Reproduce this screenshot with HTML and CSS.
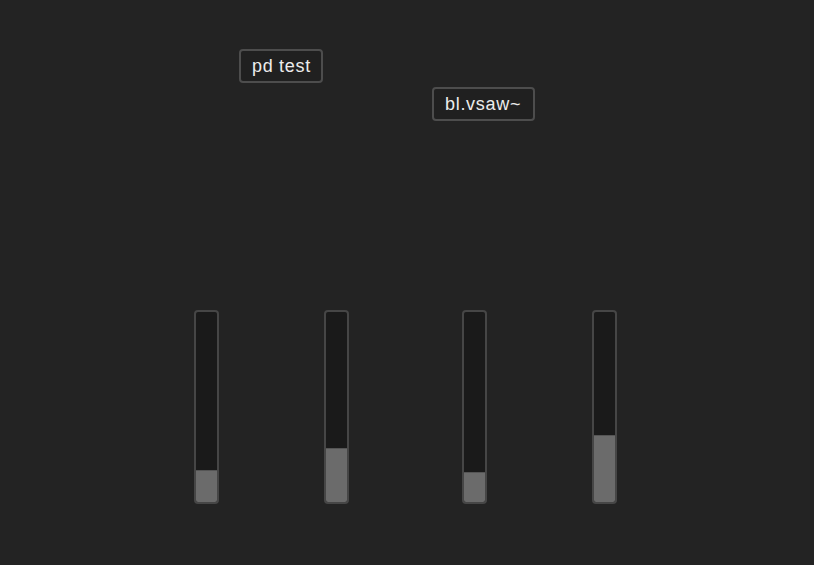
FILE: index.html
```html
<!DOCTYPE html>
<html>
<head>
<meta charset="utf-8">
<link rel="stylesheet" href="styles.css">
</head>
<body>
<div class="canvas">
  <div class="obj obj-pd">pd test</div>
  <div class="obj obj-saw">bl.vsaw~</div>
  <div class="slider s1"><div class="fill" style="height:31px"></div></div>
  <div class="slider s2"><div class="fill" style="height:53px"></div></div>
  <div class="slider s3"><div class="fill" style="height:29px"></div></div>
  <div class="slider s4"><div class="fill" style="height:66px"></div></div>
</div>
</body>
</html>
```
FILE: styles.css
```css
html, body {
  margin: 0;
  padding: 0;
  background: #232323;
}
.canvas {
  position: relative;
  width: 814px;
  height: 565px;
  background: #232323;
  overflow: hidden;
  font-family: "Liberation Sans", Arial, sans-serif;
}
.obj {
  position: absolute;
  box-sizing: border-box;
  height: 34px;
  border: 2px solid #4d4d4d;
  border-radius: 4px;
  background: #202020;
  color: #ececec;
  font-size: 18px;
  letter-spacing: 0.7px;
  line-height: 30px;
  padding: 0 11px;
  white-space: nowrap;
}
.obj-pd { left: 239px; top: 49px; width: 84px; }
.obj-saw { left: 432px; top: 87px; width: 103px; }
.slider {
  position: absolute;
  top: 310px;
  box-sizing: border-box;
  width: 25px;
  height: 194px;
  border: 2px solid #464646;
  border-radius: 4px;
  background: #1a1a1a;
  display: flex;
  flex-direction: column;
  justify-content: flex-end;
  overflow: hidden;
}
.fill {
  background: #6b6b6b;
  border-top: 1px solid #555;
}
.s1 { left: 194px; }
.s2 { left: 324px; }
.s3 { left: 462px; }
.s4 { left: 592px; }
```
